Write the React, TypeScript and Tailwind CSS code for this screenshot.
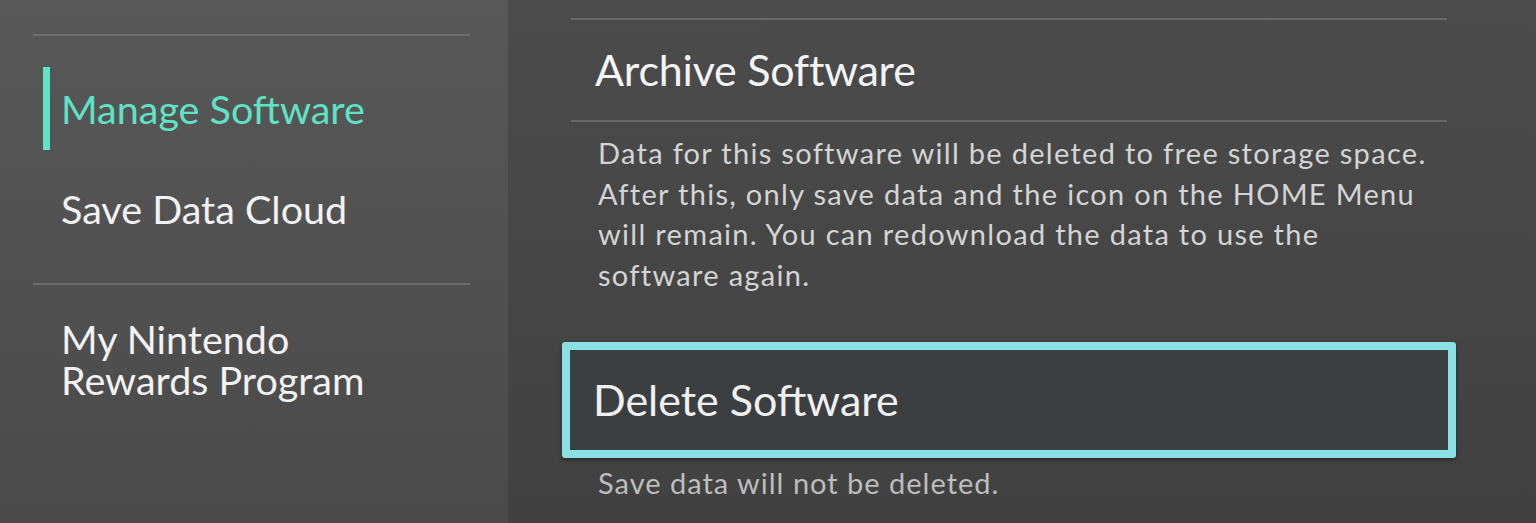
export default function App() {
  return (
    <div
      className="flex h-[523px] w-[1536px] overflow-hidden"
      style={{ fontFamily: "Lato, 'Noto Sans', sans-serif" }}
    >
      {/* sidebar */}
      <aside className="w-[508px] shrink-0 bg-gradient-to-b from-[#585858] to-[#4a4a4a] px-[33px] pt-[34px]">
        <div className="h-[2px] w-[437px] bg-[#6c6c6c]" />
        <div className="mt-[31px] flex h-[83px] items-center">
          <div className="ml-[10px] h-full w-[7px] bg-[#5fe3c6]" />
          <span className="ml-[11px] text-[39.5px] text-[#5fe3c6]">Manage Software</span>
        </div>
        <div className="mt-[17px] flex h-[83px] items-center pl-[28px]">
          <span className="text-[39.5px] text-[#f2f2f2]">Save Data Cloud</span>
        </div>
        <div className="mt-[33px] h-[2px] w-[437px] bg-[#6c6c6c]" />
        <div className="mt-[33px] pl-[28px] text-[39.5px] leading-[41px] text-[#f2f2f2]">
          <div>My Nintendo</div>
          <div>Rewards Program</div>
        </div>
      </aside>

      {/* content */}
      <main className="flex-1 bg-gradient-to-b from-[#4b4b4b] to-[#414141] pt-[18px]">
        <div className="ml-[63px] w-[876px]">
          <div className="h-[2px] bg-[#676767]" />
          <div className="flex h-[100px] items-center pl-[24px]">
            <span className="text-[43px] tracking-[-0.2px] text-[#f4f4f4]">Archive Software</span>
          </div>
          <div className="h-[2px] bg-[#676767]" />
          <div className="mt-[11px] pl-[27px] text-[29px] leading-[40.5px] tracking-[1.3px] text-[#d4d4d4]">
            <div>Data for this software will be deleted to free storage space.</div>
            <div>After this, only save data and the icon on the HOME Menu</div>
            <div>will remain. You can redownload the data to use the</div>
            <div>software again.</div>
          </div>
          <div className="-mx-[9px] mt-[47px] flex h-[116px] items-center rounded-[3px] border-[8px] border-[#8ae0e5] bg-[#3c3f42] pl-[23px] shadow-[0_2px_4px_rgba(0,0,0,0.4)]">
            <span className="text-[43px] text-[#f0f0f0]">Delete Software</span>
          </div>
          <p className="mt-[5px] pl-[27px] text-[29px] leading-[40px] tracking-[1px] text-[#bdbdbd]">
            Save data will not be deleted.
          </p>
        </div>
      </main>
    </div>
  );
}
